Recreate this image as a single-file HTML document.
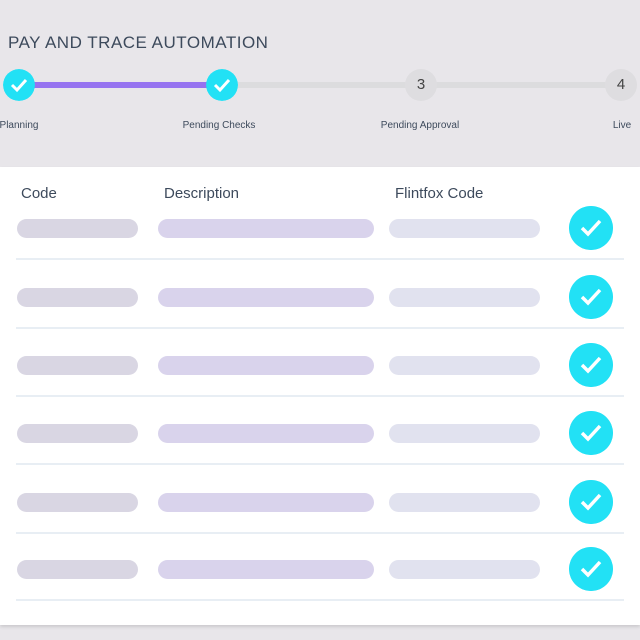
<!DOCTYPE html>
<html><head><style>
body{margin:0;width:640px;height:640px;background:#e8e6ea;font-family:"Liberation Sans",sans-serif;position:relative;overflow:hidden}
.a{position:absolute}
.t{left:8px;top:33px;font-size:17px;color:#3d4a5c;letter-spacing:0.5px}
.c{width:32px;height:32px;border-radius:50%;top:69px}
.lbl{top:120px;font-size:10px;color:#3d4a5c;transform:translateX(-50%);white-space:nowrap}
.num{background:#dedde0;color:#444;font-size:15px;text-align:center;line-height:32px}
.panel{left:0;top:167px;width:640px;height:458px;background:#fff;box-shadow:0 2px 3px rgba(0,0,0,.12)}
.h{top:185px;font-size:15px;color:#3d4a5c}
.p{height:19px;border-radius:10px}
.ck{left:569px;width:44px;height:44px;border-radius:50%;background:#22e1f5}
.ln{left:16px;width:608px;height:2px;background:#e8eef4}
</style></head><body>
<div class="a t">PAY AND TRACE AUTOMATION</div>
<div class="a" style="left:19px;top:82px;width:203px;height:6px;background:#9673f0"></div>
<div class="a" style="left:222px;top:82px;width:400px;height:6px;background:#dcdcde"></div>
<svg class="a c" style="left:3px" viewBox="0 0 32 32"><circle cx="16" cy="16" r="16" fill="#22e1f5"/><path d="M9 16l5 5 9-10" stroke="#fff" stroke-width="3" fill="none"/></svg>
<svg class="a c" style="left:206px" viewBox="0 0 32 32"><circle cx="16" cy="16" r="16" fill="#22e1f5"/><path d="M9 16l5 5 9-10" stroke="#fff" stroke-width="3" fill="none"/></svg>
<div class="a c num" style="left:405px">3</div>
<div class="a c num" style="left:605px">4</div>
<div class="a lbl" style="left:19px">Planning</div>
<div class="a lbl" style="left:219px">Pending Checks</div>
<div class="a lbl" style="left:420px">Pending Approval</div>
<div class="a lbl" style="left:622px">Live</div>
<div class="a panel"></div>
<div class="a h" style="left:21px">Code</div>
<div class="a h" style="left:164px">Description</div>
<div class="a h" style="left:395px">Flintfox Code</div>
<div id="rows"></div>
<script>
var ys=[228,297,365,433,502,569],h='';
ys.forEach(function(y,i){
h+='<div class="a p" style="left:17px;top:'+(y-9)+'px;width:121px;background:#d9d6e3"></div>';
h+='<div class="a p" style="left:158px;top:'+(y-9)+'px;width:216px;background:#d9d3ec"></div>';
h+='<div class="a p" style="left:389px;top:'+(y-9)+'px;width:151px;background:#e1e2ef"></div>';
h+='<svg class="a ck" style="top:'+(y-22)+'px" viewBox="0 0 44 44"><circle cx="22" cy="22" r="22" fill="#22e1f5"/><path d="M13 22l6 6 12-13" stroke="#fff" stroke-width="3.5" fill="none"/></svg>';
h+='<div class="a ln" style="top:'+(y+30)+'px"></div>';
});
document.getElementById('rows').innerHTML=h;
</script>
</body></html>
